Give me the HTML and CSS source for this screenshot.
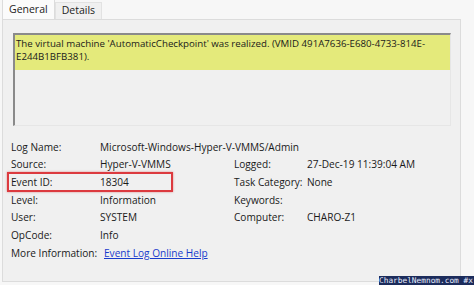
FILE: index.html
```html
<!DOCTYPE html>
<html lang="en">
<head>
    <meta charset="UTF-8">
    <title>Event Properties</title>
    <link rel="stylesheet" href="styles.css">
</head>
<body>
<div class="window">
    <div class="tabs">
        <div class="tab active">General</div>
        <div class="tab">Details</div>
    </div>
    <div class="panel">
        <div class="message">
            <div class="selected">The virtual machine 'AutomaticCheckpoint' was realized. (VMID 491A7636-E680-4733-814E-<br>E244B1BFB381).</div>
        </div>
        <div class="props">
            <div class="row">
                <span>Log Name:</span>
                <span class="wide">Microsoft-Windows-Hyper-V-VMMS/Admin</span>
            </div>
            <div class="row">
                <span>Source:</span>
                <span>Hyper-V-VMMS</span>
                <span>Logged:</span>
                <span>27-Dec-19 11:39:04 AM</span>
            </div>
            <div class="row">
                <span class="callout"></span>
                <span>Event ID:</span>
                <span>18304</span>
                <span>Task Category:</span>
                <span>None</span>
            </div>
            <div class="row">
                <span>Level:</span>
                <span>Information</span>
                <span>Keywords:</span>
                <span></span>
            </div>
            <div class="row">
                <span>User:</span>
                <span>SYSTEM</span>
                <span>Computer:</span>
                <span>CHARO-Z1</span>
            </div>
            <div class="row">
                <span>OpCode:</span>
                <span class="wide">Info</span>
            </div>
            <div class="row">
                <span>More Information:</span>
                <span class="wide link"><a href="#">Event Log Online Help</a></span>
            </div>
        </div>
    </div>
    <div class="watermark">CharbelNemnom.com #x</div>
</div>
</body>
</html>
```

FILE: styles.css
```css
body {
    margin: 0;
    background: #f7f7f7;
    font-family: "Open Sans", "Noto Sans", sans-serif;
    font-size: 10.5px;
    color: #1a1a1a;
}

.window {
    position: relative;
    width: 474px;
    height: 285px;
    overflow: hidden;
    padding: 0 0 0 2px;
    box-sizing: border-box;
}

.tabs {
    display: flex;
    height: 19px;
    align-items: flex-end;
}

.tab {
    padding: 0 6px;
    height: 16px;
    line-height: 15px;
    background: #f0f0f0;
    border: 1px solid #e2e2e2;
    border-bottom: none;
    color: #222;
}

.tab.active {
    height: 19px;
    line-height: 18px;
    background: #fbfbfb;
    border-color: #dcdcdc;
}

.panel {
    width: 459px;
    height: 263px;
    box-sizing: border-box;
    background: #f0f0f0;
    border: 1px solid #dcdcdc;
    padding: 13px 9px 0 10px;
}

.message {
    height: 93px;
    box-sizing: border-box;
    border-top: 2px solid #8a8a8a;
    border-left: 2px solid #8a8a8a;
    border-right: 1px solid #e6e6e6;
    border-bottom: 1px solid #e6e6e6;
    background: #f0f0f0;
}

.selected {
    background: #e4ea7b;
    padding: 3px 0 7px 1px;
    font-size: 9.7px;
    line-height: 12.5px;
    white-space: nowrap;
}

.props {
    margin-top: 12px;
    margin-left: -2px;
    font-size: 10.1px;
}

.row {
    position: relative;
    display: grid;
    grid-template-columns: 89px 134px 73px 1fr;
    height: 17.67px;
    align-items: center;
    white-space: nowrap;
}

.wide {
    grid-column: 2 / 5;
}

.link {
    padding-left: 4px;
}

.callout {
    position: absolute;
    left: -4px;
    top: -1px;
    width: 166px;
    height: 20px;
    border: 2px solid #dc3a3f;
    box-shadow: 0 0 2px rgba(200, 40, 40, 0.5);
    box-sizing: border-box;
}

a {
    color: #1a3ccc;
    text-decoration: underline;
}

.watermark {
    position: absolute;
    right: 0;
    bottom: 0;
    width: 95px;
    height: 9px;
    background: #1c2c5c;
    color: #e8ecff;
    font-family: "DejaVu Sans Mono", monospace;
    font-size: 7.8px;
    line-height: 10px;
    white-space: nowrap;
    overflow: hidden;
}
```
